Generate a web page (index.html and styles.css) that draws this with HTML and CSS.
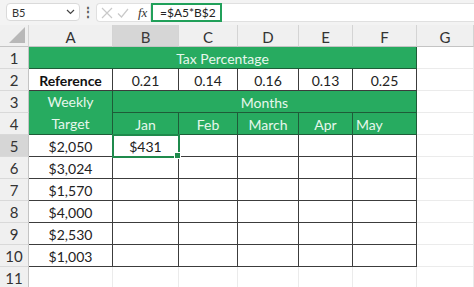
FILE: index.html
```html
<!DOCTYPE html>
<html>
<head>
<meta charset="utf-8">
<link rel="stylesheet" href="styles.css">
</head>
<body>
<div class="app">
  <div class="toolbar">
    <div class="namebox"><span class="name">B5</span>
      <svg class="chev" width="9" height="6" viewBox="0 0 9 6"><path d="M1 1 L4.5 4.5 L8 1" fill="none" stroke="#444" stroke-width="1.2"/></svg>
    </div>
    <div class="dots">⋮</div>
    <div class="fxbox">
      <svg width="12" height="12" viewBox="0 0 12 12"><path d="M1 1 L11 11 M11 1 L1 11" stroke="#c9c9c9" stroke-width="1.2"/></svg>
      <svg width="12" height="12" viewBox="0 0 12 12"><path d="M1 6.5 L4.5 10 L11 2" fill="none" stroke="#c9c9c9" stroke-width="1.2"/></svg>
      <span class="fx">fx</span>
    </div>
    <div class="formula"><div class="fhl">=$A5*B$2</div></div>
  </div>
  <div class="sheet">
    <div class="corner"><svg width="17" height="17" viewBox="0 0 17 17"><path d="M16 0 L16 16 L0 16 Z" fill="#b8b8b8"/></svg></div>
    <div class="ch">A</div><div class="ch sel">B</div><div class="ch">C</div><div class="ch">D</div><div class="ch">E</div><div class="ch">F</div><div class="ch">G</div>

    <div class="rh">1</div>
    <div class="c t g span6">Tax Percentage</div>
    <div class="c"></div>

    <div class="rh">2</div>
    <div class="c t b">Reference</div>
    <div class="c t">0.21</div><div class="c t">0.14</div><div class="c t">0.16</div><div class="c t">0.13</div><div class="c t">0.25</div>
    <div class="c"></div>

    <div class="rh">3</div>
    <div class="c t g rows2">Weekly<br>Target</div>
    <div class="c t g span5">Months</div>
    <div class="c"></div>

    <div class="rh">4</div>
    <div class="c t g">Jan</div><div class="c t g">Feb</div><div class="c t g">March</div><div class="c t g">Apr</div><div class="c t g left">May</div>
    <div class="c"></div>

    <div class="rh rsel">5</div>
    <div class="c t">$2,050</div><div class="c t active">$431</div><div class="c t"></div><div class="c t"></div><div class="c t"></div><div class="c t"></div>
    <div class="c"></div>

    <div class="rh">6</div>
    <div class="c t">$3,024</div><div class="c t"></div><div class="c t"></div><div class="c t"></div><div class="c t"></div><div class="c t"></div>
    <div class="c"></div>

    <div class="rh">7</div>
    <div class="c t">$1,570</div><div class="c t"></div><div class="c t"></div><div class="c t"></div><div class="c t"></div><div class="c t"></div>
    <div class="c"></div>

    <div class="rh">8</div>
    <div class="c t">$4,000</div><div class="c t"></div><div class="c t"></div><div class="c t"></div><div class="c t"></div><div class="c t"></div>
    <div class="c"></div>

    <div class="rh">9</div>
    <div class="c t">$2,530</div><div class="c t"></div><div class="c t"></div><div class="c t"></div><div class="c t"></div><div class="c t"></div>
    <div class="c"></div>

    <div class="rh">10</div>
    <div class="c t">$1,003</div><div class="c t"></div><div class="c t"></div><div class="c t"></div><div class="c t"></div><div class="c t"></div>
    <div class="c"></div>

    <div class="rh">11</div>
    <div class="c"></div><div class="c"></div><div class="c"></div><div class="c"></div><div class="c"></div><div class="c"></div><div class="c"></div>
  </div>
</div>
</body>
</html>
```
FILE: styles.css
```css
html, body {
  margin: 0;
  padding: 0;
  background: #ffffff;
}
.app {
  width: 474px;
  height: 287px;
  overflow: hidden;
  font-family: Lato, "Open Sans", sans-serif;
  color: #222;
}
.toolbar {
  height: 25px;
  box-sizing: border-box;
  background: #f3f3f3;
  display: flex;
  align-items: flex-start;
  padding-top: 3px;
}
.namebox {
  margin-left: 6px;
  width: 74px;
  height: 18px;
  box-sizing: border-box;
  background: #fff;
  border: 1px solid #dadada;
  border-radius: 4px;
  display: flex;
  align-items: center;
  justify-content: space-between;
  padding: 0 4px 0 5px;
}
.name {
  font-size: 11px;
  color: #333;
}
.dots {
  width: 16px;
  text-align: center;
  font-size: 12px;
  color: #555;
  line-height: 18px;
  font-weight: bold;
}
.fxbox {
  width: 54px;
  height: 19px;
  box-sizing: border-box;
  background: #fff;
  border: 1px solid #e0e0e0;
  border-right: none;
  border-radius: 4px 0 0 4px;
  display: flex;
  align-items: center;
  gap: 4px;
  padding-left: 4px;
}
.fx {
  font-family: "Liberation Serif", serif;
  font-style: italic;
  font-size: 13px;
  color: #333;
  margin-left: 5px;
}
.formula {
  flex: 1;
  height: 19px;
  box-sizing: border-box;
  background: #fff;
  border-top: 1px solid #e0e0e0;
  border-bottom: 1px solid #e0e0e0;
  border-left: 1px solid #e8e8e8;
}
.fhl {
  width: 71px;
  height: 19px;
  box-sizing: border-box;
  margin-top: -1px;
  border: 2px solid #21a05a;
  font-size: 12px;
  color: #222;
  padding-left: 7px;
  line-height: 15px;
}
.sheet {
  display: grid;
  grid-template-columns: 29px 84px 66px 59px 61px 54px 64px 57px;
  grid-template-rows: repeat(12, 22px);
  font-size: 14px;
}
.corner {
  background: #f0f0f0;
  border-right: 1px solid #d4d4d4;
  border-bottom: 1px solid #c4c4c4;
  display: flex;
  align-items: flex-end;
  justify-content: flex-end;
  padding: 0 2px 2px 0;
  box-sizing: border-box;
}
.ch {
  background: #f0f0f0;
  border-right: 1px solid #d4d4d4;
  border-bottom: 1px solid #c4c4c4;
  box-sizing: border-box;
  display: flex;
  align-items: center;
  justify-content: center;
  color: #333;
  font-size: 15px;
  padding-top: 2px;
}
.ch.sel {
  background: #d6d6d6;
  color: #3a3a3a;
}
.rh {
  background: #f0f0f0;
  border-right: 1px solid #c4c4c4;
  border-bottom: 1px solid #d9d9d9;
  box-sizing: border-box;
  display: flex;
  align-items: center;
  justify-content: center;
  color: #333;
  font-size: 15px;
  padding-top: 1px;
}
.rh.rsel {
  background: #d6d6d6;
}
.c {
  box-sizing: border-box;
  border-right: 1px solid #ebebeb;
  border-bottom: 1px solid #ebebeb;
  display: flex;
  align-items: center;
  justify-content: center;
  padding-top: 1px;
  white-space: nowrap;
}
.c.t {
  border-right: 1px solid #3c3c3c;
  border-bottom: 1px solid #3c3c3c;
}
.c.g {
  background: #27ab60;
  color: #e6f7ec;
  border-color: #1e5c38;
}
.c.b {
  font-weight: bold;
  color: #111;
}
.span6 {
  grid-column: span 6;
}
.span5 {
  grid-column: span 5;
}
.rows2 {
  grid-row: span 2;
  line-height: 22px;
  text-align: center;
}
.left {
  justify-content: flex-start;
  padding-left: 3px;
}
.active {
  outline: 2px solid #1f8a4c;
  outline-offset: -1px;
  position: relative;
}
.active::after {
  content: "";
  position: absolute;
  right: -3px;
  bottom: -3px;
  width: 5px;
  height: 5px;
  background: #1f8a4c;
  border: 1px solid #fff;
}
```
